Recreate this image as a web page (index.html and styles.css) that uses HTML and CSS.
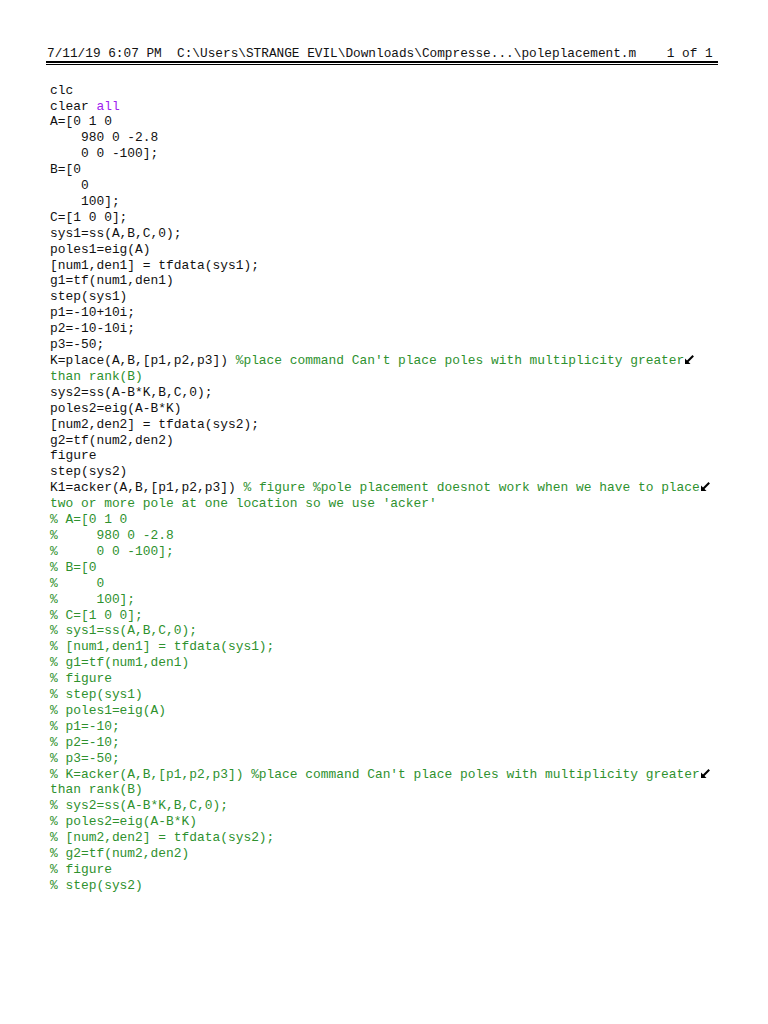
FILE: index.html
```html
<!DOCTYPE html>
<html>
<head>
<meta charset="utf-8">
<link rel="stylesheet" href="styles.css">
</head>
<body>
<div class="page">
<div class="header">7/11/19 6:07 PM  C:\Users\STRANGE EVIL\Downloads\Compresse...\poleplacement.m    1 of 1</div>
<pre class="code">clc
clear <span class="k">all</span>
A=[0 1 0
    980 0 -2.8
    0 0 -100];
B=[0
    0
    100];
C=[1 0 0];
sys1=ss(A,B,C,0);
poles1=eig(A)
[num1,den1] = tfdata(sys1);
g1=tf(num1,den1)
step(sys1)
p1=-10+10i;
p2=-10-10i;
p3=-50;
K=place(A,B,[p1,p2,p3]) <span class="c">%place command Can't place poles with multiplicity greater</span><svg class="cont" width="9" height="9" viewBox="0 0 9 9"><line x1="8.2" y1="0.8" x2="2" y2="7" stroke="#000" stroke-width="2"/><polygon points="0,9 0,3.5 5.5,9" fill="#000"/></svg>
<span class="c">than rank(B)</span>
sys2=ss(A-B*K,B,C,0);
poles2=eig(A-B*K)
[num2,den2] = tfdata(sys2);
g2=tf(num2,den2)
figure
step(sys2)
K1=acker(A,B,[p1,p2,p3]) <span class="c">% figure %pole placement doesnot work when we have to place</span><svg class="cont" width="9" height="9" viewBox="0 0 9 9"><line x1="8.2" y1="0.8" x2="2" y2="7" stroke="#000" stroke-width="2"/><polygon points="0,9 0,3.5 5.5,9" fill="#000"/></svg>
<span class="c">two or more pole at one location so we use 'acker'</span>
<span class="c">% A=[0 1 0
%     980 0 -2.8
%     0 0 -100];
% B=[0
%     0
%     100];
% C=[1 0 0];
% sys1=ss(A,B,C,0);
% [num1,den1] = tfdata(sys1);
% g1=tf(num1,den1)
% figure
% step(sys1)
% poles1=eig(A)
% p1=-10;
% p2=-10;
% p3=-50;
% K=acker(A,B,[p1,p2,p3]) %place command Can't place poles with multiplicity greater</span><svg class="cont" width="9" height="9" viewBox="0 0 9 9"><line x1="8.2" y1="0.8" x2="2" y2="7" stroke="#000" stroke-width="2"/><polygon points="0,9 0,3.5 5.5,9" fill="#000"/></svg>
<span class="c">than rank(B)
% sys2=ss(A-B*K,B,C,0);
% poles2=eig(A-B*K)
% [num2,den2] = tfdata(sys2);
% g2=tf(num2,den2)
% figure
% step(sys2)</span></pre>
</div>
</body>
</html>
```

FILE: styles.css
```css
html, body {
  margin: 0;
  padding: 0;
  background: #fff;
}

.page {
  padding: 46px 0 0 46px;
  font-family: "Liberation Mono", "Courier New", monospace;
  color: #111;
}

.header {
  width: 672px;
  font-size: 12.75px;
  line-height: 15px;
  white-space: pre;
  padding-left: 1px;
  box-sizing: border-box;
  border-bottom: 2px solid #000;
  position: relative;
}

.header::after {
  content: "";
  display: block;
  position: absolute;
  left: 0;
  right: 0;
  bottom: -4px;
  height: 1px;
  background: #000;
}

.code {
  margin: 19.6px 0 0 4px;
  font-family: "Liberation Mono", "Courier New", monospace;
  font-size: 12.9px;
  line-height: 15.9px;
  color: #111;
}

.c {
  color: #2e912e;
}

.k {
  color: #a020f0;
}

.cont {
  vertical-align: baseline;
  margin-left: 1px;
}
```
